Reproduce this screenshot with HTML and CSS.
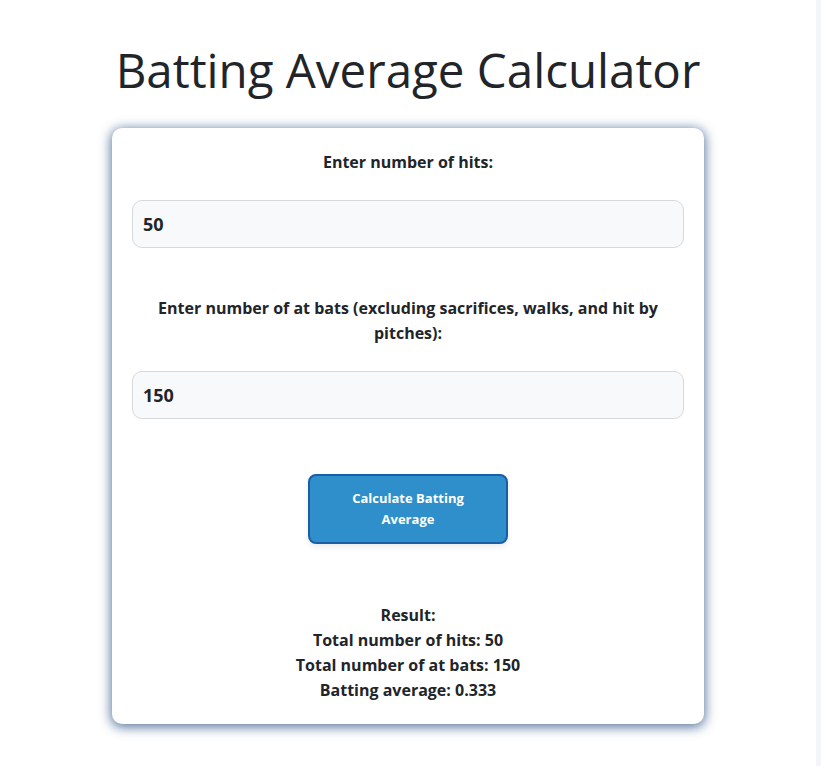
FILE: index.html
```html
<!DOCTYPE html>
<html lang="en">
<head>
    <meta charset="UTF-8">
    <meta name="viewport" content="width=device-width, initial-scale=1.0">
    <title>Batting Average Calculator</title>
    <link rel="stylesheet" href="styles.css">
</head>
<body>
    <div class="page">
        <h1>Batting Average Calculator</h1>
        <form class="calculator" id="calc-form">
            <label for="hits">Enter number of hits:</label>
            <input type="text" id="hits" name="hits" value="50">

            <label for="at-bats">Enter number of at bats (excluding sacrifices, walks, and hit by pitches):</label>
            <input type="text" id="at-bats" name="atBats" value="150">

            <button type="submit" class="calc-button">Calculate Batting Average</button>

            <div class="result">
                <p>Result:</p>
                <p>Total number of hits: 50</p>
                <p>Total number of at bats: 150</p>
                <p>Batting average: 0.333</p>
            </div>
        </form>
    </div>
</body>
</html>
```

FILE: styles.css
```css
body {
    margin: 0;
    padding: 0;
    font-family: 'Segoe UI', 'Open Sans', 'Noto Sans', sans-serif;
    background: #ffffff;
    color: #212529;
}

.page {
    min-height: 100vh;
    border-right: 5px solid #f3f5f9;
    display: flex;
    flex-direction: column;
    align-items: center;
}

h1 {
    font-size: 47.5px;
    font-weight: 400;
    line-height: 1.2;
    margin: 41px 0 30px;
    color: #212529;
}

.calculator {
    width: 592px;
    box-sizing: border-box;
    padding: 22px 20px 21px;
    background: #ffffff;
    border-radius: 10px;
    box-shadow: 0 2px 12px 1px rgba(55, 90, 140, 0.85);
    display: flex;
    flex-direction: column;
    align-items: center;
    text-align: center;
}

label {
    display: block;
    font-size: 16px;
    font-weight: 700;
    line-height: 25px;
    margin-bottom: 25px;
    padding: 0 20px;
}

input {
    width: 100%;
    height: 48px;
    box-sizing: border-box;
    padding: 0 10px;
    margin: 0 0 48px;
    border: 1px solid #d6d9dc;
    border-radius: 10px;
    background: #f8f9fa;
    color: #212529;
    font-family: inherit;
    font-size: 18px;
    font-weight: 700;
}

#at-bats {
    margin-bottom: 55px;
}

.calc-button {
    width: 200px;
    padding: 12px 30px;
    border: 2px solid #1b5ea8;
    border-radius: 8px;
    background: #2e8fca;
    color: #ffffff;
    font-family: inherit;
    font-size: 13px;
    font-weight: 700;
    line-height: 21px;
    cursor: pointer;
    box-shadow: 0 3px 6px rgba(0, 0, 0, 0.08);
}

.result {
    margin-top: 59px;
    font-size: 16px;
    font-weight: 700;
    line-height: 25px;
}

.result p {
    margin: 0;
}
```
